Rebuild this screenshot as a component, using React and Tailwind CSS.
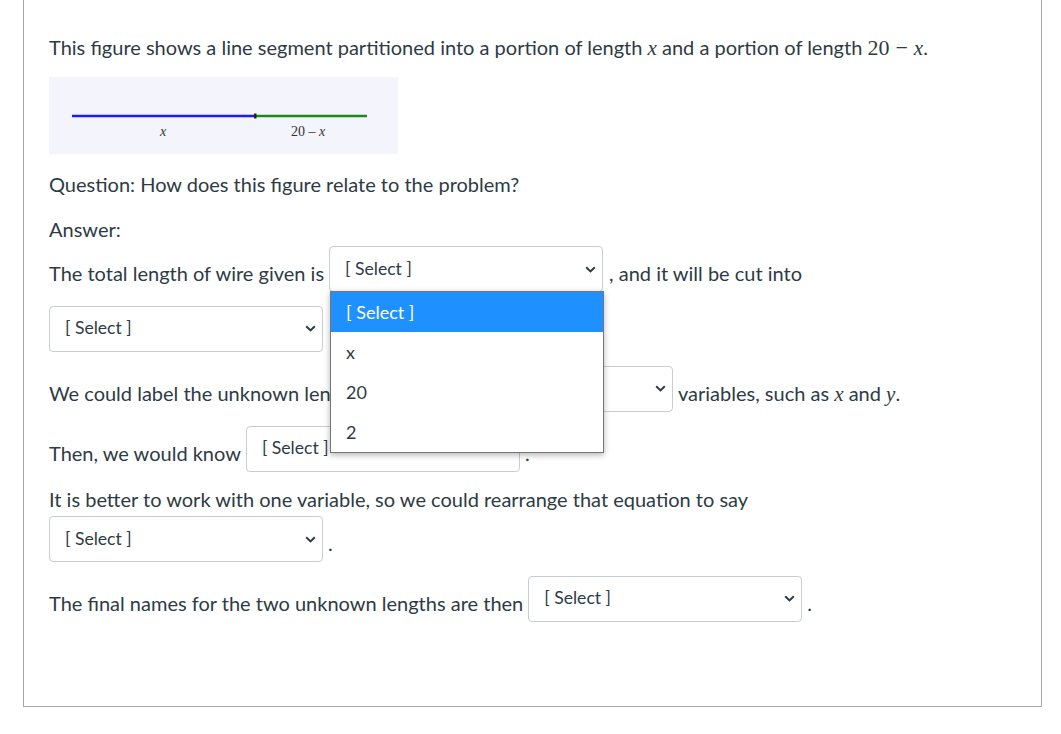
import React from "react";

const Chevron = () => (
  <svg width="11" height="7" viewBox="0 0 11 7" className="shrink-0">
    <path d="M1.2 1.2 L5.5 5.4 L9.8 1.2" fill="none" stroke="#2d3b45" strokeWidth="2" />
  </svg>
);

function Select({ className = "" }) {
  return (
    <div
      className={
        "flex h-[46px] w-[274px] shrink-0 items-center justify-between rounded-[4px] border border-[#c7cdd1] bg-white pl-[15px] pr-[6px] text-[17.6px] leading-none " +
        className
      }
    >
      <span className="pb-[1px]">[ Select ]</span>
      <Chevron />
    </div>
  );
}

const MathX = () => (
  <span className="font-['Liberation_Serif',serif] text-[21px] leading-none italic">x</span>
);
const MathY = () => (
  <span className="font-['Liberation_Serif',serif] text-[21px] leading-none italic">y</span>
);

function Figure() {
  return (
    <div className="mt-[15px] h-[77px] w-[349px] bg-[#f4f4fc]">
      <svg width="349" height="77" viewBox="0 0 349 77">
        <line x1="23" y1="39" x2="206" y2="39" stroke="#1a1aff" strokeWidth="2.5" />
        <line x1="206" y1="39" x2="318" y2="39" stroke="#1b8a1b" strokeWidth="2.5" />
        <rect x="205" y="36.5" width="2.5" height="5" fill="#222" />
        <text x="114" y="59" fontFamily="Liberation Serif, serif" fontStyle="italic" fontSize="14" fill="#333" textAnchor="middle">
          x
        </text>
        <text x="259" y="59" fontFamily="Liberation Serif, serif" fontSize="14" fill="#333" textAnchor="middle">
          20 – <tspan fontStyle="italic">x</tspan>
        </text>
      </svg>
    </div>
  );
}

export default function App() {
  return (
    <div className="min-h-[734px] bg-white font-['Lato',sans-serif] text-[20px] leading-[30px] text-[#2d3b45]">
      <div className="ml-[23px] w-[1019px] border-x border-b border-[#a6a6a6] pb-[84px] pl-[25px] pt-[32px]">
        <p>
          This figure shows a line segment partitioned into a portion of length <MathX /> and a portion of length{" "}
          <span className="font-['Liberation_Serif',serif] text-[22px] leading-none">20</span>
          <span className="mx-[6px] font-['Liberation_Serif',serif] text-[22px] leading-none">−</span>
          <MathX />.
        </p>

        <Figure />

        <p className="mt-[15px]">Question: How does this figure relate to the problem?</p>
        <p className="mt-[15px]">Answer:</p>

        {/* line with the open dropdown */}
        <div className="mt-[2px] flex h-[46px] items-center">
          <span className="pt-[8px]">The total length of wire given is</span>
          <div className="relative z-10 ml-[5px]">
            <Select />
            <div className="absolute left-[1px] top-[45px] w-[274px] border border-[#767676] bg-white text-[18px] shadow-[0_2px_6px_rgba(0,0,0,0.3)]">
              <div className="flex h-[40px] items-center bg-[#1e90ff] pl-[15px] text-white">[ Select ]</div>
              <div className="flex h-[40px] items-center pl-[15px]">x</div>
              <div className="flex h-[40px] items-center pl-[15px]">20</div>
              <div className="flex h-[40px] items-center pl-[15px]">2</div>
            </div>
          </div>
          <span className="ml-[6px] pt-[8px]">, and it will be cut into</span>
        </div>

        <div className="mt-[13px] flex h-[47px] items-center">
          <Select />
        </div>

        <div className="mt-[13px] flex h-[47px] items-center">
          <span className="w-[350px] shrink-0 overflow-hidden whitespace-nowrap pt-[8px]">We could label the unknown lengths as</span>
          <Select />
          <span className="ml-[5px] pt-[8px]">
            variables, such as <MathX /> and <MathY />.
          </span>
        </div>

        <div className="mt-[13px] flex h-[47px] items-center">
          <span className="pt-[8px]">Then, we would know</span>
          <Select className="ml-[5px]" />
          <span className="ml-[5px] pt-[8px]">.</span>
        </div>

        <p className="mt-[12px]">It is better to work with one variable, so we could rearrange that equation to say</p>

        <div className="mt-[2px] flex h-[46px] items-center">
          <Select />
          <span className="ml-[5px] pt-[8px]">.</span>
        </div>

        <div className="mt-[13px] flex h-[47px] items-center">
          <span className="pt-[8px]">The final names for the two unknown lengths are then</span>
          <Select className="ml-[5px]" />
          <span className="ml-[5px] pt-[8px]">.</span>
        </div>
      </div>
    </div>
  );
}
